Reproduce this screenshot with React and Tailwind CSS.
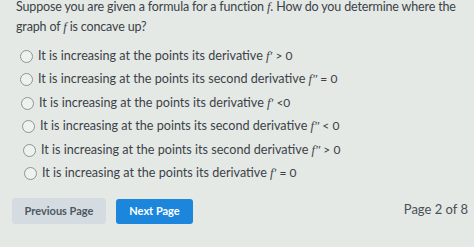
const options = [
  { text: "It is increasing at the points its derivative ", math: "f\u2032 > 0", shift: "ml-0" },
  { text: "It is increasing at the points its second derivative ", math: "f\u2033 =  0", shift: "ml-0" },
  { text: "It is increasing at the points its derivative ", math: "f\u2032 <0", shift: "ml-[1px]" },
  { text: "It is increasing at the points its second derivative ", math: "f\u2033 < 0", shift: "ml-[2px]" },
  { text: "It is increasing at the points its second derivative ", math: "f\u2033 > 0", shift: "ml-[3px]" },
  { text: "It is increasing at the points its derivative ", math: "f\u2032 = 0", shift: "ml-[4px]" },
];

const Math = ({ value }) => {
  const [f, ...rest] = value.split(" ");
  return (
    <span className="font-['Liberation_Serif',serif] italic">
      {f}
      <span className="not-italic font-['Lato',sans-serif] text-[12px]"> {rest.join(" ")}</span>
    </span>
  );
};

export default function App() {
  return (
    <div className="w-[474px] h-[247px] overflow-hidden bg-[#e4e9e6] font-['Lato',sans-serif] text-[#3c4247]">
      <div className="pl-4 -mt-[3px] text-[12.5px] leading-[19px] tracking-[-0.15px]">
        Suppose you are given a formula for a function <span className="italic font-['Liberation_Serif',serif]">f</span>. How do you determine where the
        graph of <span className="italic font-['Liberation_Serif',serif]">f</span> is concave up?
      </div>

      <div className="mt-[9px] pl-5 flex flex-col gap-[3px]">
        {options.map((o, i) => (
          <label key={i} className={`flex items-center gap-[5px] h-[20.5px] ${o.shift}`}>
            <span className="w-[13px] h-[13px] rounded-full border border-[#8d9498] bg-[#eef2ef] shrink-0" />
            <span className="text-[12.6px] whitespace-nowrap">
              {o.text}
              <Math value={o.math} />
            </span>
          </label>
        ))}
      </div>

      <div className="mt-[14px] pl-3 pr-[6px] flex items-center">
        <button className="w-[94px] h-[26px] rounded-[3px] bg-[#d4dce1] text-[#4d5862] text-[11px] font-bold">
          Previous Page
        </button>
        <button className="ml-[10px] w-[77px] h-[25px] rounded-[3px] bg-[#1c86dc] text-white text-[11px] font-bold">
          Next Page
        </button>
        <span className="ml-auto -mt-[2px] text-[13px] text-[#4a5056]">Page 2 of 8</span>
      </div>
    </div>
  );
}
